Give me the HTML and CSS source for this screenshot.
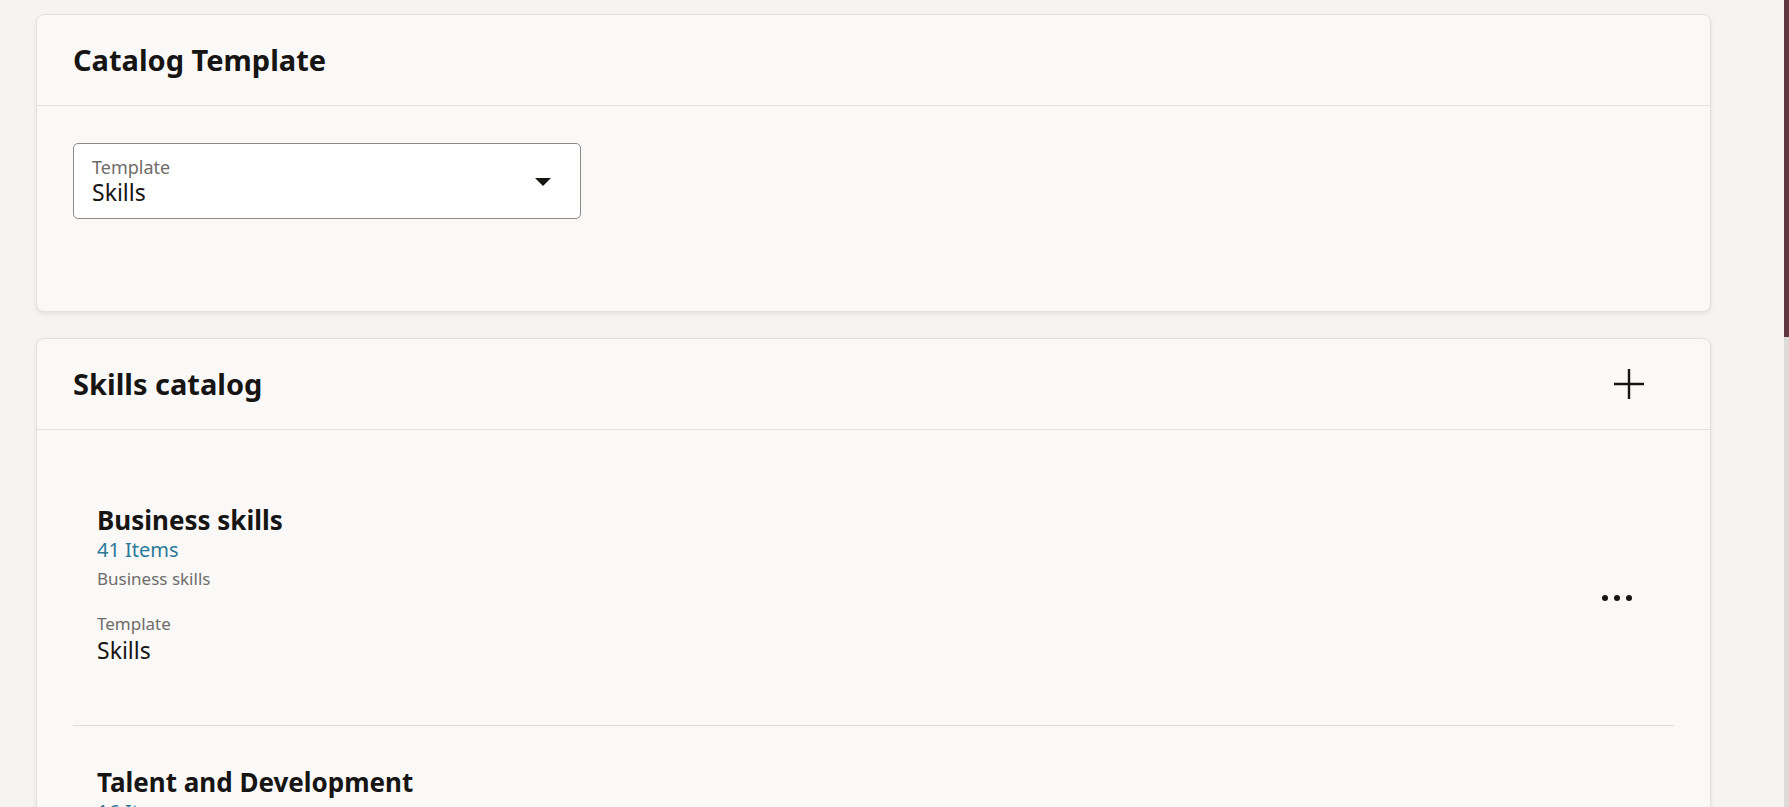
FILE: index.html
```html
<!DOCTYPE html>
<html lang="en">
<head>
<meta charset="utf-8">
<title>Catalog Template</title>
<link rel="stylesheet" href="styles.css">
</head>
<body>
<div class="page">
  <main class="content">
    <section class="card">
      <header class="card-header">
        <h2 class="card-title">Catalog Template</h2>
      </header>
      <div class="card-body card-body--form">
        <div class="select">
          <div class="select-text">
            <div class="select-label">Template</div>
            <div class="select-value">Skills</div>
          </div>
          <svg class="select-arrow" width="16" height="8" viewBox="0 0 16 8"><path d="M0 0 H16 L8 8 Z" fill="#161513"/></svg>
        </div>
      </div>
    </section>

    <section class="card">
      <header class="card-header">
        <h2 class="card-title">Skills catalog</h2>
        <button class="icon-btn" aria-label="Add">
          <svg width="30" height="30" viewBox="0 0 30 30"><path d="M15 0 V30 M0 15 H30" stroke="#161513" stroke-width="2.4" fill="none"/></svg>
        </button>
      </header>
      <div class="list">
        <div class="item">
          <div class="item-main">
            <div class="item-title">Business skills</div>
            <div class="item-count">41 Items</div>
            <div class="item-desc">Business skills</div>
            <div class="field-label">Template</div>
            <div class="field-value">Skills</div>
          </div>
          <button class="more-btn" aria-label="More">
            <svg width="30" height="8" viewBox="0 0 30 8"><circle cx="3" cy="4" r="3" fill="#161513"/><circle cx="15" cy="4" r="3" fill="#161513"/><circle cx="27" cy="4" r="3" fill="#161513"/></svg>
          </button>
        </div>
        <div class="item">
          <div class="item-main">
            <div class="item-title">Talent and Development</div>
            <div class="item-count">16 Items</div>
            <div class="item-desc">Talent and Development</div>
            <div class="field-label">Template</div>
            <div class="field-value">Skills</div>
          </div>
          <button class="more-btn" aria-label="More">
            <svg width="30" height="8" viewBox="0 0 30 8"><circle cx="3" cy="4" r="3" fill="#161513"/><circle cx="15" cy="4" r="3" fill="#161513"/><circle cx="27" cy="4" r="3" fill="#161513"/></svg>
          </button>
        </div>
      </div>
    </section>
  </main>
  <div class="scrollbar"><div class="scrollbar-thumb"></div></div>
</div>
</body>
</html>
```
FILE: styles.css
```css
* { box-sizing: border-box; }
html, body {
  margin: 0;
  height: 100%;
  overflow: hidden;
}
body {
  background: #f5f4f2;
  font-family: "Noto Sans", "Open Sans", sans-serif;
  color: #161513;
}
.page {
  display: flex;
  height: 807px;
}
.content {
  flex: 1;
  padding: 14px 73px 0 36px;
  display: flex;
  flex-direction: column;
  gap: 26px;
}
.card {
  background: #faf9f8;
  border: 1px solid #e4e1dd;
  border-radius: 8px;
  box-shadow: 0 2px 4px rgba(0, 0, 0, 0.08);
}
.card-header {
  height: 91px;
  border-bottom: 1px solid #e4e1dd;
  display: flex;
  align-items: center;
  justify-content: space-between;
  padding: 0 66px 0 36px;
}
.card-title {
  margin: 0;
  font-size: 29px;
  line-height: 36px;
  font-weight: 700;
}
.icon-btn, .more-btn {
  border: 0;
  background: none;
  padding: 0;
  display: flex;
  cursor: pointer;
}
.more-btn { margin-top: 26px; }
.card-body--form {
  padding: 37px 36px 92px;
}
.select {
  width: 508px;
  height: 76px;
  background: #fff;
  border: 1px solid #8f8c88;
  border-radius: 5px;
  display: flex;
  align-items: center;
  justify-content: space-between;
  padding: 0 29px 0 18px;
}
.select-text {
  align-self: flex-start;
  padding-top: 13px;
}
.select-label {
  font-size: 18px;
  line-height: 21px;
  color: #6f6c69;
}
.select-value {
  font-size: 23px;
  line-height: 28px;
  color: #161513;
}
.select-arrow { margin-top: 2px; }
.list {
  padding: 34px 36px 0;
}
.item {
  display: flex;
  align-items: center;
  justify-content: space-between;
  padding: 41px 42px 61px 24px;
  border-bottom: 1px solid #dedbd7;
}
.item-title {
  font-size: 26px;
  line-height: 31px;
  font-weight: 700;
}
.item-count {
  font-size: 20px;
  line-height: 28px;
  color: #2b7a98;
}
.item-desc {
  font-size: 17px;
  line-height: 30px;
  color: #6f6c69;
}
.field-label {
  margin-top: 18px;
  font-size: 17px;
  line-height: 24px;
  color: #6f6c69;
}
.field-value {
  font-size: 23px;
  line-height: 28px;
}
.scrollbar {
  width: 5px;
  height: 807px;
  background: #dddbd8;
}
.scrollbar-thumb {
  height: 337px;
  background: #5e3541;
}
```
